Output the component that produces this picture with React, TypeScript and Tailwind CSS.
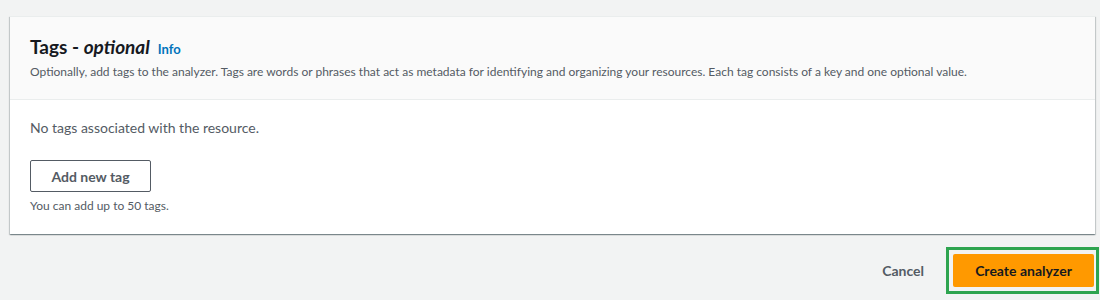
export default function App() {
  return (
    <div
      className="w-[1100px] h-[300px] bg-[#f2f3f3] pt-4 pl-[10px] pr-[5px]"
      style={{ fontFamily: 'Lato, Arial, sans-serif' }}
    >
      {/* Tags container */}
      <div className="bg-white shadow-[0_1px_1px_0_rgba(0,28,36,0.3),1px_1px_1px_0_rgba(0,28,36,0.15),-1px_1px_1px_0_rgba(0,28,36,0.15)] border-t border-[#eaeded]">
        <div className="bg-[#fafafa] border-b border-[#eaeded] px-5 pt-[19px] pb-[19px]">
          <h2 className="flex items-baseline gap-2 text-[19px] leading-[22px] font-bold text-[#16191f]">
            <span>
              Tags - <i className="font-bold">optional</i>
            </span>
            <a className="text-[13px] font-bold text-[#0073bb]">Info</a>
          </h2>
          <p className="mt-[4px] text-[12px] leading-[16px] text-[#545b64]">
            Optionally, add tags to the analyzer. Tags are words or phrases that act as metadata for identifying and organizing your resources. Each tag consists of a key and one optional value.
          </p>
        </div>
        <div className="px-5 pt-[17px] pb-[20px]">
          <p className="text-[14px] leading-[22px] text-[#545b64]">No tags associated with the resource.</p>
          <button className="mt-[21px] h-[32px] w-[121px] border border-[#545b64] rounded-[2px] bg-white text-[14px] font-bold text-[#545b64]">
            Add new tag
          </button>
          <p className="mt-[6px] text-[12px] leading-[16px] text-[#545b64]">You can add up to 50 tags.</p>
        </div>
      </div>

      {/* Actions */}
      <div className="flex items-center justify-end mt-[13px] -mr-[4px]">
        <button className="text-[14px] font-bold text-[#545b64] mr-[22px]">Cancel</button>
        <div className="border-[3px] border-[#2ea44f] pl-[4px] pr-[2px] py-[4px]">
          <button className="h-[33px] w-[141px] bg-[#ff9900] rounded-[2px] text-[14px] font-bold text-[#16191f]">
            Create analyzer
          </button>
        </div>
      </div>
    </div>
  )
}
